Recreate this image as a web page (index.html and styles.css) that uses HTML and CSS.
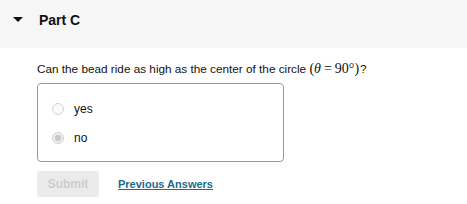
FILE: index.html
```html
<!DOCTYPE html>
<html lang="en">
<head>
  <meta charset="UTF-8" />
  <title>Part C</title>
  <link rel="stylesheet" href="styles.css">
</head>
<body>
  <div class="part-header">
    <span class="caret"></span>
    <h2 class="part-title">Part C</h2>
  </div>

  <div class="part-body">
    <p class="question">Can the bead ride as high as the center of the circle <span class="math">(<i>θ</i><span class="op">=</span>90°)</span>?</p>

    <div class="choices">
      <label class="choice">
        <span class="radio"></span>
        <span>yes</span>
      </label>
      <label class="choice">
        <span class="radio checked"></span>
        <span>no</span>
      </label>
    </div>

    <div class="actions">
      <button class="submit" disabled>Submit</button>
      <a href="#" class="prev-link">Previous Answers</a>
    </div>
  </div>
</body>
</html>
```

FILE: styles.css
```css
body {
  margin: 0;
  font-family: Helvetica, 'Liberation Sans', Arial, sans-serif;
  color: #222;
  background: #fff;
}

.part-header {
  height: 48px;
  box-sizing: border-box;
  background: #f6f6f6;
  display: flex;
  align-items: flex-start;
  padding: 12px 0 0 13px;
}

.caret {
  width: 0;
  height: 0;
  margin-top: 5px;
  border-left: 5px solid transparent;
  border-right: 5px solid transparent;
  border-top: 5px solid #111;
}

.part-title {
  margin: 0 0 0 16px;
  font-size: 14px;
  font-weight: bold;
  color: #111;
}

.part-body {
  padding: 0 37px;
}

.question {
  margin: 13px 0 0;
  font-size: 11.75px;
  line-height: 16px;
  color: #111;
}

.math {
  font-family: 'Liberation Serif', 'Times New Roman', serif;
  font-size: 14px;
  margin-right: 1px;
}

.math .op {
  margin: 0 3px;
}

.choices {
  width: 247px;
  height: 79px;
  box-sizing: border-box;
  margin-top: 6px;
  border: 1px solid #9a9a9a;
  border-radius: 4px;
  padding: 15px 0 0 14px;
}

.choice {
  display: flex;
  align-items: center;
  gap: 10px;
  height: 20px;
  margin-bottom: 9px;
  font-size: 12px;
  color: #111;
}

.radio {
  width: 10px;
  height: 10px;
  border-radius: 50%;
  border: 1px solid #d2d2d2;
  background: #fbfbfb;
}

.radio.checked {
  background: radial-gradient(circle, #c9c9c9 0 3px, #ededed 3.5px);
}

.actions {
  display: flex;
  align-items: center;
  margin-top: 9px;
  gap: 19px;
}

.submit {
  width: 62px;
  height: 26px;
  border: none;
  border-radius: 2px;
  background: #ebebeb;
  color: #cdcdcd;
  font-family: inherit;
  font-size: 12px;
  font-weight: bold;
}

.prev-link {
  font-size: 11px;
  font-weight: bold;
  color: #1b6c8e;
}
```
